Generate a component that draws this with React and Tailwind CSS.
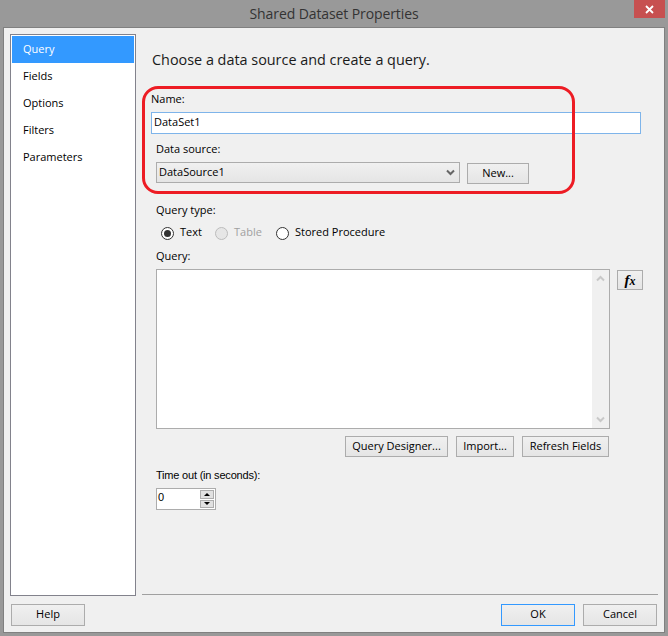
const NAV = ['Query', 'Fields', 'Options', 'Filters', 'Parameters'];

const Btn = ({ className = '', children }) => (
  <button className={`h-[21px] pb-px flex items-center justify-center border border-[#acacac] bg-gradient-to-b from-[#f0f0f0] to-[#e5e5e5] text-[11px] text-black ${className}`}>
    {children}
  </button>
);

const Radio = ({ checked, disabled, label, className = '' }) => (
  <div className={`flex items-center gap-[6px] ${className}`}>
    <span className={`w-[13px] h-[13px] rounded-full border flex items-center justify-center ${disabled ? 'border-[#bcbcbc] bg-[#e6e6e6]' : 'border-[#333] bg-white'}`}>
      {checked && <span className="w-[7px] h-[7px] rounded-full bg-[#333]" />}
    </span>
    <span className={`pb-[2px] ${disabled ? 'text-[#a0a0a0]' : 'text-black'}`}>{label}</span>
  </div>
);

const Chevron = ({ up, color = '#666', className = '' }) => (
  <svg width="9" height="7" viewBox="0 0 9 7" className={className}>
    <path d={up ? 'M1 5.5 L4.5 2 L8 5.5' : 'M1 1.5 L4.5 5 L8 1.5'} fill="none" stroke={color} strokeWidth="2" />
  </svg>
);

export default function App() {
  return (
    <div className="relative w-[668px] h-[636px] bg-[#999999] overflow-hidden text-[11px] leading-[14px] text-black font-['Open_Sans','Noto_Sans',sans-serif]">
      {/* title bar */}
      <div className="relative h-[27px] flex items-center justify-center text-[14px] tracking-[-0.1px] text-[#333]">
        Shared Dataset Properties
        <div className="absolute right-[3px] top-0 w-[31px] h-[18px] bg-[#c75050] flex items-center justify-center">
          <svg width="9" height="9" viewBox="0 0 9 9">
            <path d="M1 1 L8 8 M8 1 L1 8" stroke="#fff" strokeWidth="1.8" />
          </svg>
        </div>
      </div>

      {/* window */}
      <div className="ml-[3px] w-[662px] h-[606px] border border-[#808080] bg-[#f0f0f0] flex flex-col">
        <div className="flex pt-[6px] pl-[6px]">
          <div className="w-[126px] h-[562px] border border-[#82828c] bg-white p-px">
            {NAV.map((n, i) => (
              <div key={n} className={`h-[27px] pl-[11px] pb-[2px] flex items-center ${i === 0 ? 'bg-[#3399ff] text-white' : 'text-black'}`}>
                {n}
              </div>
            ))}
          </div>

          <div className="ml-[6px] w-[516px] h-[561px] flex flex-col border-b border-[#a0a0a0]">
            <div className="mt-[15px] ml-[10px] h-[22px] text-[14.4px] leading-[22px] text-[#1a1a1a]">
              Choose a data source and create a query.
            </div>

            <div className="mt-[21px] ml-[9px] h-[16px]">Name:</div>
            <div className="mt-[4px] ml-[9px] w-[490px] h-[22px] border border-[#7eb4ea] bg-white flex items-center pl-[2px] pb-[2px]">
              DataSet1
            </div>

            <div className="mt-[8px] ml-[14px] h-[16px]">Data source:</div>
            <div className="mt-[4px] ml-[14px] flex">
              <div className="w-[304px] h-[21px] border border-[#acacac] bg-gradient-to-b from-[#f0f0f0] to-[#e5e5e5] flex items-center justify-between pl-[2px] pr-[4px]">
                <span className="pb-px">DataSource1</span>
                <Chevron />
              </div>
              <Btn className="ml-[7px] mt-px w-[62px]">New...</Btn>
            </div>

            <div className="mt-[19px] ml-[14px] h-[16px]">Query type:</div>
            <div className="mt-[6px] ml-[19px] h-[16px] flex items-center">
              <Radio checked label="Text" className="w-[54px]" />
              <Radio disabled label="Table" className="w-[61px]" />
              <Radio label="Stored Procedure" />
            </div>

            <div className="mt-[8px] ml-[14px] h-[16px]">Query:</div>
            <div className="mt-[4px] ml-[14px] flex items-start">
              <div className="w-[454px] h-[160px] border border-[#acacac] bg-white flex justify-end">
                <div className="w-[17px] h-full bg-[#f0f0f0] flex flex-col items-center justify-between py-[5px]">
                  <Chevron up color="#c8c8c8" />
                  <Chevron color="#c8c8c8" />
                </div>
              </div>
              <button className="ml-[7px] mt-px w-[26px] h-[20px] border border-[#acacac] bg-gradient-to-b from-[#f0f0f0] to-[#e5e5e5] flex items-baseline justify-center font-['Liberation_Serif',serif] italic font-bold leading-[18px] text-black">
                <span className="text-[15px]">f</span>
                <span className="text-[12px]">x</span>
              </button>
            </div>

            <div className="mt-[7px] ml-[203px] flex gap-[8px]">
              <Btn className="w-[103px]">Query Designer...</Btn>
              <Btn className="w-[58px]">Import...</Btn>
              <Btn className="w-[87px]">Refresh Fields</Btn>
            </div>

            <div className="mt-[11px] ml-[14px] h-[16px] tracking-[-0.2px] font-['Liberation_Sans',sans-serif]">Time out (in seconds):</div>
            <div className="mt-[4px] ml-[14px] w-[60px] h-[22px] border border-[#acacac] bg-white flex items-center justify-between pl-px pr-px font-['Liberation_Sans',sans-serif]">
              <span className="pb-[5px]">0</span>
              <div className="w-[14px] h-[18px] flex flex-col gap-px">
                <div className="flex-1 bg-[#e1e1e1] border border-[#adadad] flex items-center justify-center">
                  <span className="w-0 h-0 border-x-[3px] border-x-transparent border-b-[3px] border-b-black" />
                </div>
                <div className="flex-1 bg-[#e1e1e1] border border-[#adadad] flex items-center justify-center">
                  <span className="w-0 h-0 border-x-[3px] border-x-transparent border-t-[3px] border-t-black" />
                </div>
              </div>
            </div>
          </div>
        </div>

        {/* footer */}
        <div className="mt-[8px] pl-[7px] flex">
          <Btn className="w-[74px] !h-[22px] !pb-[3px]">Help</Btn>
          <Btn className="ml-[416px] w-[74px] !h-[22px] !pb-[3px] !border-[#3399ff]">OK</Btn>
          <Btn className="ml-[8px] w-[74px] !h-[22px] !pb-[3px]">Cancel</Btn>
        </div>
      </div>

      {/* red annotation drawn over the dialog */}
      <div className="absolute left-[142px] top-[86px] w-[433px] h-[108px] border-[3px] border-[#ed1c24] rounded-[16px] pointer-events-none" />
    </div>
  );
}
